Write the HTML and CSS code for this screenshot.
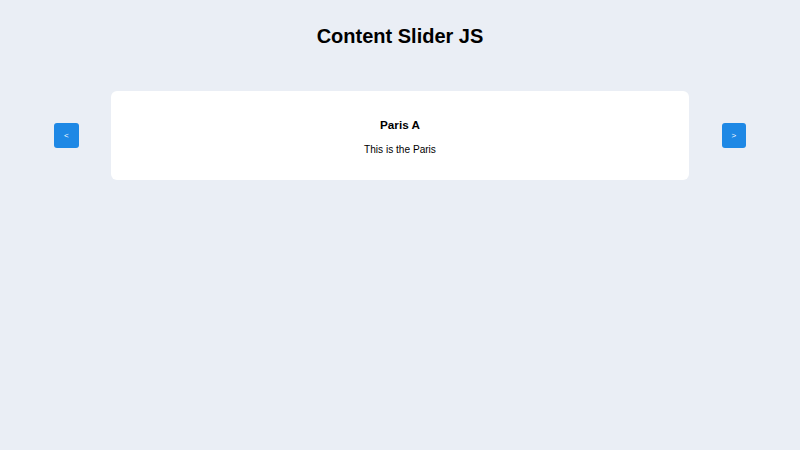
FILE: index.html
```html
<!DOCTYPE html>
<html lang="en">
<head>
    <meta charset="UTF-8">
    <meta name="viewport" content="width=device-width, initial-scale=1.0">
    <title>Content Slider JS</title>
    <link rel="stylesheet" href="styles.css">
</head>
<body>
    <h1>Content Slider JS</h1>

    <div class="slider">
        <button class="nav-btn" id="prev">&lt;</button>
        <div class="slide-card" id="slide">
            <h3>Paris A</h3>
            <p>This is the Paris</p>
        </div>
        <button class="nav-btn" id="next">&gt;</button>
    </div>
</body>
</html>
```

FILE: styles.css
```css
body { margin: 0; padding-top: 25px; background: #eaeef5; font-family: "Liberation Sans", Arial, sans-serif; color: #000; }
h1 { margin: 0; font-size: 20px; line-height: 23px; text-align: center; }
.slider { display: flex; align-items: center; justify-content: center; gap: 32.5px; margin-top: 43px; }
.nav-btn { width: 24.5px; height: 25px; padding: 0; border: none; border-radius: 3px; background: #1e88e5; color: #fff; font-family: "Liberation Sans", Arial, sans-serif; font-size: 8px; cursor: pointer; }
.slide-card { width: 578px; box-sizing: border-box; padding: 27px 20px 24px; background: #fff; border-radius: 6px; text-align: center; }
.slide-card h3 { margin: 0 0 12px; font-size: 11.7px; line-height: 14px; }
.slide-card p { margin: 0; font-size: 10.1px; line-height: 12px; }
```
